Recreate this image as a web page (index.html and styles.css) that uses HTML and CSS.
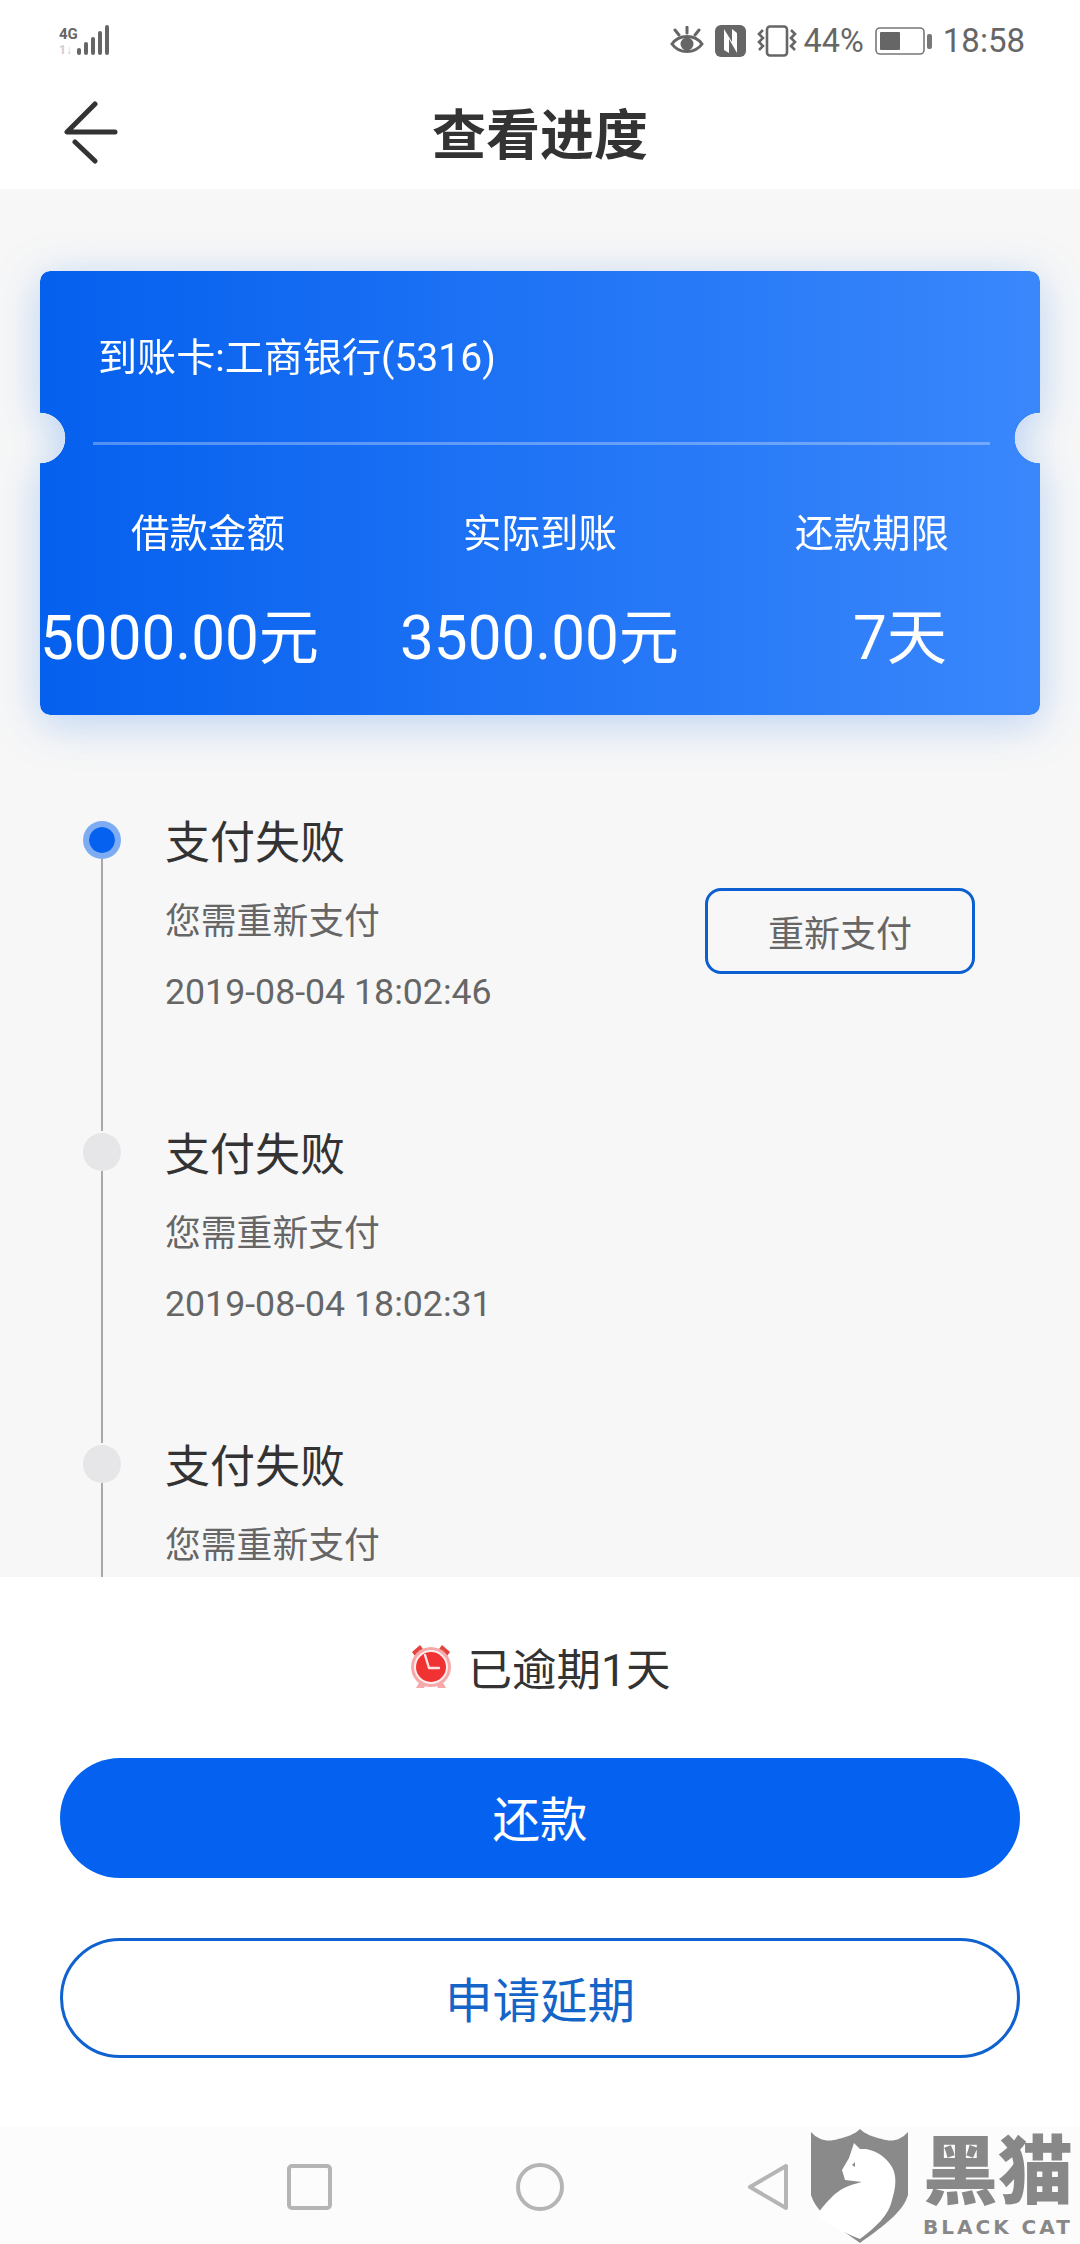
FILE: index.html
```html
<!DOCTYPE html>
<html lang="zh">
<head>
<meta charset="utf-8">
<title>查看进度</title>
<link rel="stylesheet" href="styles.css">
</head>
<body>
<div class="app">
  <div class="status">
    <svg class="signal" width="52" height="32" viewBox="0 0 52 32">
      <text x="0" y="15" class="net">4G</text>
      <text x="0" y="30" class="net-sub">1↓</text>
      <rect x="18" y="24" width="4" height="7" rx="2" fill="#666"/>
      <rect x="25" y="18" width="4" height="13" rx="2" fill="#666"/>
      <rect x="32" y="13" width="4" height="18" rx="2" fill="#666"/>
      <rect x="39" y="7" width="4" height="24" rx="2" fill="#666"/>
      <rect x="46" y="1" width="4" height="30" rx="2" fill="#666"/>
    </svg>
    <div class="status-right">
      <svg width="34" height="30" viewBox="0 0 34 30" class="st-eye">
        <path d="M2 18 C9 8 25 8 32 18 C25 28 9 28 2 18 Z" fill="none" stroke="#666" stroke-width="3"/>
        <circle cx="17" cy="18" r="6.5" fill="#666"/>
        <path d="M17 1V7M5 4L9 9M29 4L25 9" stroke="#666" stroke-width="3" stroke-linecap="round"/>
      </svg>
      <svg width="31" height="32" viewBox="0 0 31 32" class="st-nfc">
        <rect x="0" y="0" width="31" height="32" rx="6" fill="#666"/>
        <path d="M9 4V25L14 28V14L22 28V8L17 4V17Z" fill="#fff"/>
      </svg>
      <svg width="40" height="32" viewBox="0 0 40 32" class="st-vib">
        <rect x="10" y="1.5" width="20" height="29" rx="3" fill="none" stroke="#666" stroke-width="2.6"/>
        <path d="M6 5L2 9L6 13L2 17L6 21L2 25M34 5L38 9L34 13L38 17L34 21L38 25" fill="none" stroke="#666" stroke-width="2.6"/>
      </svg>
      <span class="st-text pct">44%</span>
      <svg width="58" height="28" viewBox="0 0 58 28" class="st-bat">
        <rect x="1" y="1" width="48" height="26" rx="4" fill="none" stroke="#777" stroke-width="1.6"/>
        <rect x="5" y="5" width="20" height="18" rx="1" fill="#666"/>
        <rect x="52" y="7" width="5" height="15" rx="2" fill="#777"/>
      </svg>
      <span class="st-text time">18:58</span>
    </div>
  </div>

  <header class="header">
    <svg class="back" width="60" height="66" viewBox="0 0 60 66">
      <path d="M34 3L6 31H54M14 41L34 60" fill="none" stroke="#333" stroke-width="5" stroke-linecap="round" stroke-linejoin="round"/>
    </svg>
    <h1 class="title">查看进度</h1>
  </header>

  <main class="main">
    <div class="card-wrap">
      <section class="card">
        <div class="bank">到账卡:工商银行(5316)</div>
        <div class="divider"></div>
        <div class="labels">
          <span>借款金额</span>
          <span>实际到账</span>
          <span>还款期限</span>
        </div>
        <div class="amounts">
          <span>5000.00元</span>
          <span>3500.00元</span>
          <span>7天</span>
        </div>
      </section>
    </div>

    <div class="timeline">
      <article class="step">
        <div class="rail"><span class="dot dot-active"></span><span class="line"></span></div>
        <div class="step-body">
          <div class="step-title">支付失败</div>
          <div class="step-sub">您需重新支付</div>
          <div class="step-date">2019-08-04 18:02:46</div>
        </div>
        <button class="repay-again">重新支付</button>
      </article>
      <article class="step">
        <div class="rail"><span class="dot"></span><span class="line"></span></div>
        <div class="step-body">
          <div class="step-title">支付失败</div>
          <div class="step-sub">您需重新支付</div>
          <div class="step-date">2019-08-04 18:02:31</div>
        </div>
      </article>
      <article class="step">
        <div class="rail"><span class="dot"></span><span class="line"></span></div>
        <div class="step-body">
          <div class="step-title">支付失败</div>
          <div class="step-sub">您需重新支付</div>
        </div>
      </article>
    </div>
  </main>

  <section class="panel">
    <div class="overdue">
      <svg width="44" height="48" viewBox="0 0 44 48">
        <path d="M3 10L11 3L14 7L6 14ZM41 10L33 3L30 7L38 14Z" fill="#e4423f"/>
        <path d="M11 39L7 46H15L17 42ZM33 39L37 46H29L27 42Z" fill="#f7a9a9"/>
        <circle cx="22" cy="25" r="20" fill="#f7a9a9"/>
        <circle cx="22" cy="25" r="17" fill="#fdeeee"/>
        <circle cx="22" cy="25" r="15" fill="#f03232"/>
        <path d="M16 13L20 26H30" fill="none" stroke="#fbe3e3" stroke-width="2.4" stroke-linecap="round" stroke-linejoin="round"/>
      </svg>
      <span>已逾期1天</span>
    </div>
    <button class="btn btn-primary">还款</button>
    <button class="btn btn-outline">申请延期</button>
  </section>

  <nav class="nav">
    <svg width="45" height="46" viewBox="0 0 45 46"><rect x="2" y="2" width="41" height="42" rx="3" fill="none" stroke="#b5b5b5" stroke-width="4"/></svg>
    <svg width="48" height="48" viewBox="0 0 48 48"><circle cx="24" cy="24" r="22" fill="none" stroke="#b5b5b5" stroke-width="4"/></svg>
    <svg width="42" height="48" viewBox="0 0 42 48"><path d="M39 3V45L3 24Z" fill="none" stroke="#b5b5b5" stroke-width="4" stroke-linejoin="round"/></svg>
    <div class="watermark">
      <svg width="97" height="114" viewBox="0 0 97 114">
        <path d="M0 3C8 12 18 13 27 10C36 8 44 5 49 0C54 5 62 8 71 10C80 13 89 12 97 3V66C92 84 68 100 49 114C30 100 5 84 0 66Z" fill="#8a8a8a"/>
        <path d="M43 14L38 29L31 41L34 51L51 53C38 56 28 60 20 69C13 76 8 82 6 87C18 96 38 106 49 110C65 98 78 86 81 71C85 58 86 47 81 38C75 28 66 22 55 20L49 20Z" fill="#fff"/>
        <path d="M41 36L44 33L44 38Z" fill="#8a8a8a"/>
      </svg>
      <div class="wm-text">
        <div class="wm-cn">黑猫</div>
        <div class="wm-en">BLACK CAT</div>
      </div>
    </div>
  </nav>
</div>
</body>
</html>
```
FILE: styles.css
```css
* { box-sizing: border-box; }
html, body { margin: 0; padding: 0; }
body {
  width: 1080px;
  height: 2244px;
  overflow: hidden;
  background: #fff;
  font-family: Roboto, "Noto Sans CJK SC", sans-serif;
  color: #333;
}
.app { width: 1080px; height: 2244px; display: flex; flex-direction: column; }

.status {
  height: 60px;
  padding: 22px 55px 0 59px;
  display: flex;
  justify-content: space-between;
  align-items: flex-start;
  background: #fff;
}
.signal { margin-top: 2px; }
.net { font: 700 15px "Roboto", sans-serif; fill: #666; }
.net-sub { font: 700 12px "Roboto", sans-serif; fill: #ccc; }
.status-right { display: flex; align-items: center; height: 38px; }
.st-eye { margin-right: 11px; }
.st-nfc { margin-right: 11px; }
.st-vib { margin-right: 6px; }
.st-text { font-size: 32.5px; line-height: 38px; color: #666; }
.time { font-size: 33px; }
.st-bat { margin: 0 10px 0 11px; }

.header {
  height: 129px;
  position: relative;
  display: flex;
  align-items: center;
  justify-content: center;
  background: #fff;
}
.back { position: absolute; left: 61px; top: 41px; }
.title { margin: 0; font-size: 54px; line-height: 60px; font-weight: 700; color: #333; padding-top: 24px; }

.main {
  height: 1388px;
  overflow: hidden;
  background: #f7f7f7;
  padding-top: 82px;
}
.card-wrap {
  margin: 0 40px;
  height: 444px;
  filter: drop-shadow(0 8px 22px rgba(20, 110, 235, 0.28));
}
.card {
  height: 444px;
  color: #fff;
  border-radius: 10px;
  background: linear-gradient(90deg, #0560ee 0%, #3a87fc 100%);
  -webkit-mask-image: radial-gradient(circle at 0 167px, transparent 25px, #000 25.6px), radial-gradient(circle at 100% 167px, transparent 25px, #000 25.6px);
  -webkit-mask-composite: source-in;
  mask-image: radial-gradient(circle at 0 167px, transparent 25px, #000 25.6px), radial-gradient(circle at 100% 167px, transparent 25px, #000 25.6px);
  mask-composite: intersect;
  padding-top: 62px;
}
.bank { font-size: 39.1px; line-height: 50px; padding-left: 58px; }
.divider { height: 3px; margin: 59px 50px 0 53px; background: rgba(255, 255, 255, 0.3); }
.labels {
  display: flex;
  justify-content: space-between;
  padding: 0 91px;
  margin-top: 64px;
  font-size: 38.5px;
  line-height: 50px;
}
.amounts {
  display: grid;
  grid-template-columns: 360px 453px 1fr;
  margin-top: 45px;
  font-size: 60.2px;
  line-height: 70px;
  white-space: nowrap;
}

.timeline { margin-top: 104px; padding: 0 105px 0 83px; }
.step { height: 312px; display: flex; align-items: flex-start; }
.rail { width: 38px; height: 312px; display: flex; flex-direction: column; align-items: center; padding-top: 2px; flex: none; }
.dot { width: 38px; height: 38px; border-radius: 50%; background: #e6e6e8; flex: none; }
.dot-active { background: #0562f0; border: 6px solid rgba(5, 98, 240, 0.5); background-clip: padding-box; }
.line { width: 2px; flex: 1; background: #a8a8a8; }
.step-body { margin-left: 44px; flex: 1; }
.step-title { font-size: 45px; line-height: 50px; color: #333; }
.step-sub { font-size: 35.8px; line-height: 50px; margin-top: 28px; color: #666; }
.step-date { font-size: 35.7px; line-height: 50px; margin-top: 20px; color: #666; white-space: nowrap; }
.repay-again {
  width: 270px;
  height: 86px;
  margin-top: 69px;
  border: 3px solid #0b5fd0;
  border-radius: 16px;
  background: transparent;
  font-family: inherit;
  font-size: 36px;
  color: #666;
  padding: 0;
  flex: none;
}

.panel {
  height: 550px;
  background: #fff;
  padding: 64px 60px 0;
  display: flex;
  flex-direction: column;
}
.overdue {
  height: 50px;
  display: flex;
  align-items: center;
  justify-content: center;
  gap: 14px;
  font-size: 44.5px;
  color: #333;
}
.btn {
  height: 120px;
  border-radius: 60px;
  font-family: inherit;
  font-size: 47.5px;
  flex: none;
}
.btn-primary { margin-top: 67px; background: #0562f0; color: #fff; border: 0; padding: 0 0 4px; }
.btn-outline { margin-top: 60px; background: #fff; color: #1565c8; border: 3px solid #0f62cf; padding: 0 0 2px; }

.nav {
  height: 117px;
  background: #fcfcfc;
  position: relative;
  display: flex;
  align-items: center;
  gap: 183.5px;
  padding: 3px 0 0 287px;
}
.watermark { position: absolute; left: 811px; top: 2px; display: flex; gap: 15px; color: #888; }
.wm-text { width: 151px; padding-top: 5px; }
.wm-cn { font-size: 75px; line-height: 76px; font-weight: 900; white-space: nowrap; }
.wm-en { font-family: "DejaVu Sans", sans-serif; font-size: 20px; line-height: 24px; font-weight: 700; letter-spacing: 3px; margin-top: 5px; white-space: nowrap; }
```
